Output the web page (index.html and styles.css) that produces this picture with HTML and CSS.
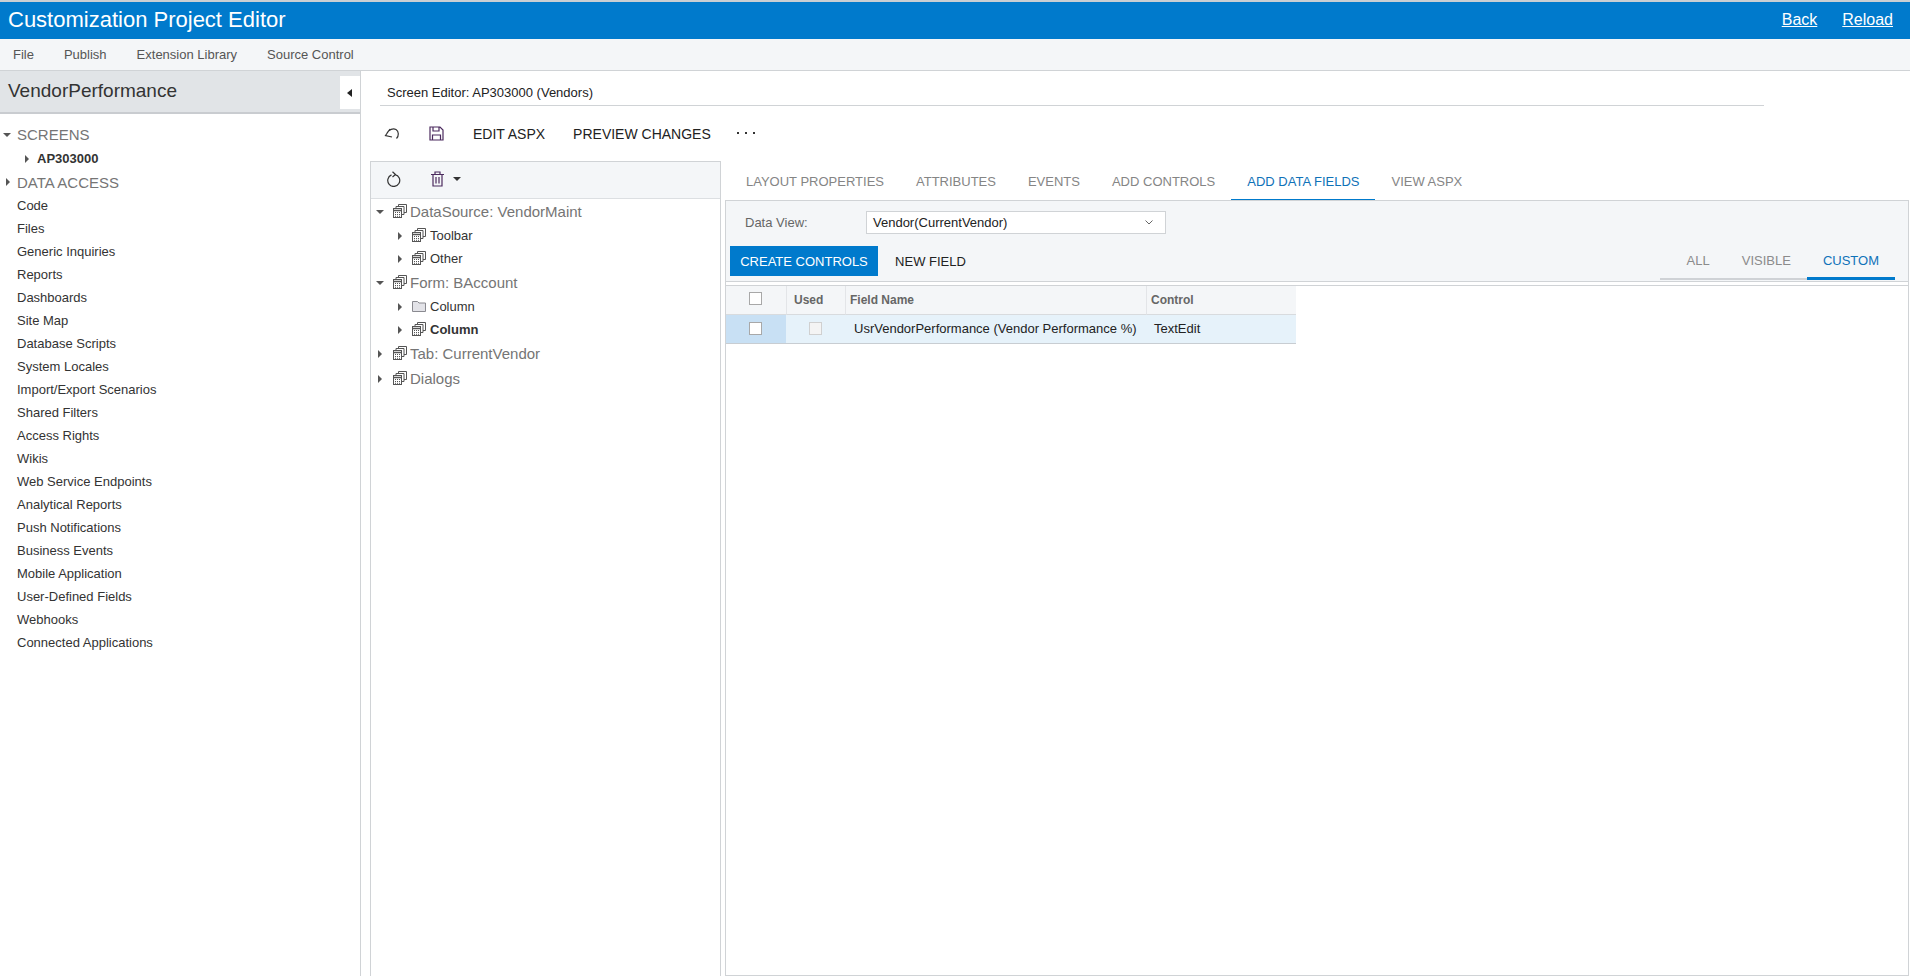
FILE: index.html
```html
<!DOCTYPE html>
<html lang="en">
<head>
<meta charset="utf-8">
<title>Customization Project Editor</title>
<link rel="stylesheet" href="styles.css">
</head>
<body>
<svg class="defs" width="0" height="0" aria-hidden="true">
  <symbol id="stack" viewBox="0 0 14 14">
    <path d="M5.5 3V.5h8v8H11M3 5V2.5h8v8H8.500" fill="none" stroke="#555" stroke-width="1"/>
    <rect x=".5" y="4.500" width="8" height="9" fill="#fff" stroke="#555"/>
    <path d="M.5 6.500h8" stroke="#555" stroke-width="1.500"/>
    <path d="M2 8.500h1m1 0h1m1 0h1M2 10.500h1m1 0h1m1 0h1M2 12.300h1m1 0h1m1 0h1" stroke="#555" stroke-width="1"/>
  </symbol>
</svg>
<header class="topbar">
  <h1 class="app-title">Customization Project Editor</h1>
  <nav class="top-links"><a href="#">Back</a><a href="#">Reload</a></nav>
</header>
<nav class="menubar">
  <span>File</span><span>Publish</span><span>Extension Library</span><span>Source Control</span>
</nav>
<div class="workspace">
  <aside class="sidebar">
    <div class="side-head">
      <span>VendorPerformance</span>
      <button class="collapse" aria-label="Collapse"><i class="tri tri-left"></i></button>
    </div>
    <div class="side-tree">
      <div class="row row-head"><i class="slot-a"><i class="tri tri-down"></i></i>SCREENS</div>
      <div class="row row-sub"><i class="tri tri-right"></i>AP303000</div>
      <div class="row row-head"><i class="slot-a"><i class="tri tri-right"></i></i>DATA ACCESS</div>
      <div class="row row-item">Code</div>
      <div class="row row-item">Files</div>
      <div class="row row-item">Generic Inquiries</div>
      <div class="row row-item">Reports</div>
      <div class="row row-item">Dashboards</div>
      <div class="row row-item">Site Map</div>
      <div class="row row-item">Database Scripts</div>
      <div class="row row-item">System Locales</div>
      <div class="row row-item">Import/Export Scenarios</div>
      <div class="row row-item">Shared Filters</div>
      <div class="row row-item">Access Rights</div>
      <div class="row row-item">Wikis</div>
      <div class="row row-item">Web Service Endpoints</div>
      <div class="row row-item">Analytical Reports</div>
      <div class="row row-item">Push Notifications</div>
      <div class="row row-item">Business Events</div>
      <div class="row row-item">Mobile Application</div>
      <div class="row row-item">User-Defined Fields</div>
      <div class="row row-item">Webhooks</div>
      <div class="row row-item">Connected Applications</div>
    </div>
  </aside>
  <main class="editor">
    <div class="editor-title">Screen Editor: AP303000 (Vendors)</div>
    <div class="editor-tools">
      <svg class="ic-undo" width="17" height="14" viewBox="0 0 17 14"><path d="M6 2 1.500 8.500 8 10M3 6C5 2.500 9 1 12 2.500c3 2 3 6.500.5 9" fill="none" stroke="#333" stroke-width="1.200"/></svg>
      <svg class="ic-save" width="15" height="15" viewBox="0 0 15 15"><path d="M1 1h10l3 3v10H1zM4 1v4h6V1M3.500 14V9h8v5" fill="none" stroke="#4b2a5e" stroke-width="1.200"/></svg>
      <span class="tool-text t-edit">EDIT ASPX</span>
      <span class="tool-text t-prev">PREVIEW CHANGES</span>
      <span class="dots" aria-label="More"><i></i><i></i><i></i></span>
    </div>
    <div class="split">
      <section class="tree-panel">
        <div class="tree-tools">
          <svg width="15" height="16" viewBox="0 0 15 16"><path d="M4.500 3.900A6 6 0 1 0 8 3.600M5.500.8 8.500 3.500 5.500 6" fill="none" stroke="#333" stroke-width="1.200"/></svg>
          <svg class="ic-trash" width="13" height="16" viewBox="0 0 13 16"><path d="M0 3.500h13M4 3.500V1h5v2.500M2 3.500V15h9V3.500M5 6v6.500M8 6v6.500" fill="none" stroke="#4b2a5e" stroke-width="1.200"/></svg>
          <i class="tri tri-down tri-dark"></i>
        </div>
        <ul class="tree">
          <li class="node n0 open"><i class="tri tri-down"></i><svg class="ic"><use href="#stack"/></svg>DataSource: VendorMaint</li>
          <li class="node n1"><i class="tri tri-right"></i><svg class="ic"><use href="#stack"/></svg>Toolbar</li>
          <li class="node n1"><i class="tri tri-right"></i><svg class="ic"><use href="#stack"/></svg>Other</li>
          <li class="node n0 open"><i class="tri tri-down"></i><svg class="ic"><use href="#stack"/></svg>Form: BAccount</li>
          <li class="node n1"><i class="tri tri-right"></i><svg class="ic" viewBox="0 0 14 12"><path d="M.5 3V1.500h5L7 3h6.500v8.500H.5z" fill="#e3e3e8" stroke="#8a8a90"/></svg>Column</li>
          <li class="node n1 strong"><i class="tri tri-right"></i><svg class="ic"><use href="#stack"/></svg>Column</li>
          <li class="node n0 closed"><i class="tri tri-right"></i><svg class="ic"><use href="#stack"/></svg>Tab: CurrentVendor</li>
          <li class="node n0 closed"><i class="tri tri-right"></i><svg class="ic"><use href="#stack"/></svg>Dialogs</li>
        </ul>
      </section>
      <section class="props">
        <div class="tabs">
          <span class="tab">LAYOUT PROPERTIES</span>
          <span class="tab">ATTRIBUTES</span>
          <span class="tab">EVENTS</span>
          <span class="tab">ADD CONTROLS</span>
          <span class="tab active">ADD DATA FIELDS</span>
          <span class="tab">VIEW ASPX</span>
        </div>
        <div class="tab-body">
          <div class="form-strip">
            <div class="field">
              <label>Data View:</label>
              <div class="select"><span>Vendor(CurrentVendor)</span><svg width="8" height="5" viewBox="0 0 8 5"><path d="M.5.500 4 4 7.500.500" fill="none" stroke="#666"/></svg></div>
            </div>
            <div class="action-row">
              <button class="btn-primary">CREATE CONTROLS</button>
              <button class="btn-plain">NEW FIELD</button>
              <div class="seg">
                <span>ALL</span><span>VISIBLE</span><span class="active">CUSTOM</span>
              </div>
            </div>
          </div>
          <div class="grid-wrap">
            <div class="grid">
              <div class="cell head c-check"><i class="box"></i></div>
              <div class="cell head c-used">Used</div>
              <div class="cell head c-name">Field Name</div>
              <div class="cell head c-control">Control</div>
              <div class="cell body selector"><i class="box"></i></div>
              <div class="cell body c-mid"><i class="box box-dim"></i></div>
              <div class="cell body name">UsrVendorPerformance (Vendor Performance %)</div>
              <div class="cell body ctl">TextEdit</div>
            </div>
          </div>
        </div>
      </section>
    </div>
  </main>
</div>
</body>
</html>
```
FILE: styles.css
```css
* { box-sizing: border-box; }
html, body { margin: 0; height: 976px; overflow: hidden; }
body {
  display: flex;
  flex-direction: column;
  font-family: "Liberation Sans", Arial, sans-serif;
  font-size: 13px;
  color: #222;
  background: #fff;
  border-top: 2px solid #c9ced3;
}
.defs { position: absolute; }
i { font-style: normal; display: block; }

.topbar {
  height: 37px;
  flex: none;
  display: flex;
  align-items: center;
  justify-content: space-between;
  padding: 0 17px 1px 8px;
  background: #007acc;
  color: #fff;
}
.app-title { margin: 0; font-size: 22px; font-weight: 400; }
.top-links { display: flex; gap: 25px; }
.top-links a { color: #fff; font-size: 16px; }

.menubar {
  height: 32px;
  flex: none;
  display: flex;
  align-items: center;
  gap: 30px;
  padding-left: 13px;
  background: #f4f6f8;
  border-bottom: 1px solid #d0d3d6;
  color: #555;
}

.workspace { flex: 1; display: flex; min-height: 0; }

.tri { width: 0; height: 0; border-style: solid; border-color: transparent; flex: none; }
.tri-down { border-width: 4px 4px 0; border-top-color: #555; }
.tri-right { border-width: 4px 0 4px 4px; border-left-color: #555; }
.tri-left { border-width: 4px 5px 4px 0; border-right-color: #222; }
.tri-dark { border-top-color: #333; }

.sidebar { width: 361px; flex: none; border-right: 1px solid #d0d3d6; }
.side-head {
  position: relative;
  height: 43px;
  display: flex;
  align-items: center;
  padding: 0 0 2px 8px;
  background: #e1e4e7;
  border-bottom: 2px solid #c9ccd0;
  font-size: 19px;
  color: #333;
}
.collapse {
  position: absolute;
  right: 0;
  top: 5px;
  width: 20px;
  height: 33px;
  display: flex;
  align-items: center;
  justify-content: flex-start;
  padding: 0 0 0 7px;
  background: #fff;
  border: 0;
}
.side-tree { padding-top: 9px; }
.row { height: 23px; display: flex; align-items: center; }
.row-head { font-size: 15px; color: #757575; height: 23.500px; }
.slot-a { width: 17px; padding-left: 3px; flex: none; }
.slot-a .tri-right { margin-left: 3px; }
.row-sub { padding-left: 25px; font-weight: 700; gap: 8px; color: #333; height: 24px; }
.row-item { padding-left: 17px; color: #333; }

.editor { flex: 1; min-width: 0; display: flex; flex-direction: column; }
.editor-title {
  flex: none;
  width: 1384px;
  height: 35px;
  margin-left: 19px;
  padding: 15px 0 0 7px;
  border-bottom: 1px solid #d0d3d6;
  line-height: 14px;
  font-size: 13px;
  color: #222;
}
.editor-tools {
  flex: none;
  height: 55px;
  display: flex;
  align-items: center;
  padding-left: 23px;
  color: #222;
}
.ic-save { margin-left: 28px; }
.tool-text { font-size: 14px; }
.t-edit { margin-left: 29px; }
.t-prev { margin-left: 28px; }
.dots { display: flex; gap: 6px; margin-left: 26px; margin-bottom: 2px; }
.dots i { width: 2px; height: 2px; background: #333; }

.split { flex: 1; min-height: 0; display: flex; padding-left: 9px; }
.tree-panel {
  width: 351px;
  flex: none;
  border: 1px solid #d0d3d6;
  border-bottom: 0;
}
.tree-tools {
  height: 37px;
  display: flex;
  align-items: center;
  padding: 0 0 3px 16px;
  background: #f4f6f8;
  border-bottom: 1px solid #dcdfe2;
}
.ic-trash { margin-left: 29px; }
.tree-tools .tri { margin-left: 9px; }
.tree { list-style: none; margin: 0; padding: 0; }
.node { display: flex; align-items: center; height: 23px; color: #333; }
.ic { width: 14px; height: 14px; flex: none; margin-right: 4px; margin-top: -2px; }
.n0 { padding-left: 5px; height: 25px; font-size: 15px; color: #757575; }
.n0 .tri { margin-right: 9px; }
.n0 .ic { margin-right: 3px; }
.n0.closed .tri { margin-left: 2px; margin-right: 11px; }
.n1 { padding-left: 27px; color: #333; }
.n1 .tri { margin-right: 10px; }
.strong { font-weight: 700; }

.props { flex: 1; min-width: 0; display: flex; flex-direction: column; padding: 0 1px 0 4px; }
.tabs { flex: none; height: 40px; display: flex; margin-left: 5px; }
.tab {
  padding: 12px 16px 0;
  font-size: 13px;
  line-height: 17px;
  color: #858585;
}
.tab.active { color: #0f72b8; border-bottom: 2px solid #007acc; }
.tab-body { flex: 1; min-height: 0; border: 1px solid #d0d3d6; display: flex; flex-direction: column; margin-top: -1px; }
.form-strip { flex: none; height: 81px; background: #f4f6f8; border-bottom: 1px solid #d0d3d6; padding: 10px 0 0 4px; }
.field { display: flex; align-items: center; height: 23px; }
.field label { width: 136px; padding: 0 0 1px 15px; color: #666; }
.select {
  width: 300px;
  height: 23px;
  display: flex;
  align-items: center;
  justify-content: space-between;
  padding: 0 12px 1px 6px;
  background: #fff;
  border: 1px solid #d0d3d6;
  color: #222;
}
.action-row { display: flex; align-items: flex-start; margin-top: 12px; }
.btn-primary, .btn-plain { border: 0; font-family: inherit; font-size: 13px; height: 30px; padding: 0; }
.btn-primary { width: 148px; background: #007acc; color: #fff; }
.btn-plain { width: 105px; background: transparent; color: #222; }
.seg { margin-left: auto; margin-right: 13px; margin-top: 3px; display: flex; border-bottom: 2px solid #cfd2d6; height: 31px; }
.seg span { padding: 4px 16px 0; line-height: 15px; font-size: 13px; color: #8b8b8b; }
.seg span:first-child { padding-left: 27px; }
.seg span.active { color: #0f72b8; border-bottom: 3px solid #007acc; margin-bottom: -2px; height: 31px; }

.grid-wrap { flex: 1; min-height: 0; border-top: 1px solid #d0d3d6; margin-top: 3px; }
.grid { display: grid; grid-template-columns: 60px 59px 301px 150px; grid-template-rows: 29px 29px; width: 570px; }
.cell { display: flex; align-items: center; }
.cell.head {
  background: #f4f6f8;
  color: #666;
  font-size: 12px;
  font-weight: 700;
  padding: 0 0 1px 4px;
  border-left: 1px solid #e3e5e8;
  border-bottom: 1px solid #d8dbde;
}
.cell.head.c-check { border-left: 0; justify-content: center; padding: 0 1px 3px 0; }
.cell.head.c-used { padding-left: 7px; }
.cell.body { background: #e6f2fa; border-bottom: 1px solid #c8cdd2; padding-bottom: 1px; }
.selector { background: #c8e0f4 !important; justify-content: center; padding-right: 1px; }
.c-mid { justify-content: center; }
.name { padding-left: 9px; white-space: nowrap; color: #222; }
.ctl { padding-left: 8px; color: #222; }
.box { width: 13px; height: 13px; background: #fff; border: 1px solid #a8a8a8; }
.box-dim { border-color: #d0d0d0; background: #f4f4f4; }
```
